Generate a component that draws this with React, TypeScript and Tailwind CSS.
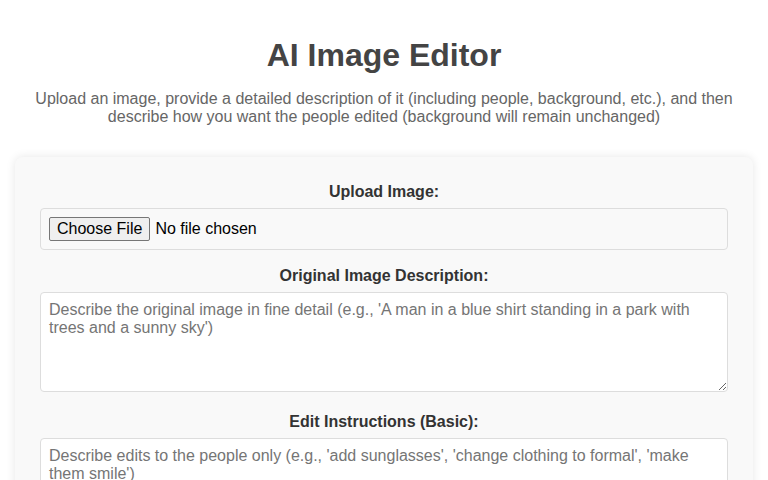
export default function App() {
  return (
    <div className="min-h-screen bg-white px-[15px] pt-[37px] font-['Liberation_Sans',Arial,sans-serif] text-[#333]">
      <h1 className="text-center text-[32px] font-bold leading-[37px] text-[#444]">AI Image Editor</h1>
      <p className="mx-auto mt-[16px] max-w-[720px] text-center text-[16px] leading-[18px] text-[#666]">
        Upload an image, provide a detailed description of it (including people, background, etc.), and then
        describe how you want the people edited (background will remain unchanged)
      </p>

      <div className="mt-[31px] rounded-[8px] bg-[#f9f9f9] px-[25px] pt-[24px] pb-[25px] shadow-[0_0_10px_rgba(0,0,0,0.1)]">
        <label className="mb-[7px] block pt-[2px] text-center text-[16px] font-bold leading-[18px]">Upload Image:</label>
        <input
          type="file"
          className="mb-[15px] block w-full rounded-[4px] border border-[#ddd] px-[8px] py-[8px] text-[16px] leading-[24px] text-black file:mr-[5px] file:rounded-[2px] file:border file:border-[#767676] file:bg-[#efefef] file:px-[7px] file:py-[1px] file:text-[16px] file:leading-[20px] file:text-black"
        />

        <label className="mb-[7px] block pt-[2px] text-center text-[16px] font-bold leading-[18px]">
          Original Image Description:
        </label>
        <textarea
          className="mb-[19px] block h-[100px] w-full rounded-[4px] border border-[#ddd] bg-white px-[8px] py-[8px] text-[16px] leading-[18px] text-black placeholder:text-[#757575]"
          placeholder="Describe the original image in fine detail (e.g., 'A man in a blue shirt standing in a park with trees and a sunny sky')"
        />

        <label className="mb-[7px] block pt-[2px] text-center text-[16px] font-bold leading-[18px]">
          Edit Instructions (Basic):
        </label>
        <textarea
          className="mb-[20px] block h-[100px] w-full rounded-[4px] border border-[#ddd] bg-white px-[8px] py-[8px] text-[16px] leading-[18px] text-black placeholder:text-[#757575]"
          placeholder="Describe edits to the people only (e.g., 'add sunglasses', 'change clothing to formal', 'make them smile')"
        />
      </div>
    </div>
  );
}
